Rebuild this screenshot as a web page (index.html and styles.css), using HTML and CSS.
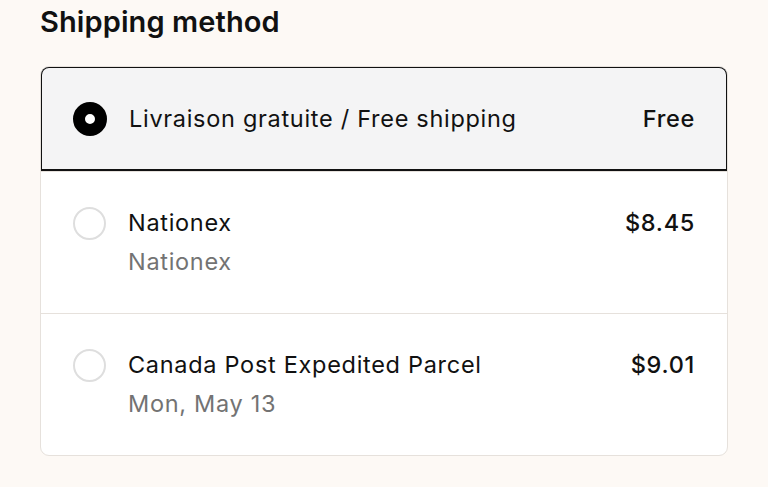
FILE: index.html
```html
<!DOCTYPE html>
<html>
<head>
<meta charset="utf-8">
<link rel="stylesheet" href="styles.css">
</head>
<body>
<div class="page">
  <h2 class="title">Shipping method</h2>
  <div class="options">
    <div class="option selected">
      <span class="radio on"></span>
      <div class="info"><div class="name">Livraison gratuite / Free shipping</div></div>
      <div class="price">Free</div>
    </div>
    <div class="option">
      <span class="radio"></span>
      <div class="info"><div class="name">Nationex</div><div class="sub">Nationex</div></div>
      <div class="price">$8.45</div>
    </div>
    <div class="option last">
      <span class="radio"></span>
      <div class="info"><div class="name">Canada Post Expedited Parcel</div><div class="sub">Mon, May 13</div></div>
      <div class="price">$9.01</div>
    </div>
  </div>
</div>
</body>
</html>
```
FILE: styles.css
```css
html, body { margin: 0; padding: 0; }
body {
  background: #fdf9f5;
  font-family: Inter, "Noto Sans", sans-serif;
  color: #111;
  width: 768px;
  height: 487px;
  overflow: hidden;
}
.page { padding: 5px 40px 0 40px; }
.title {
  margin: 0 0 27px 0;
  font-size: 29px;
  font-weight: 600;
  line-height: 34px;
  letter-spacing: 0.1px;
}
.options {
  background: #fff;
  border: 1px solid #e6e1dc;
  border-radius: 9px;
  overflow: hidden;
}
.option {
  display: flex;
  align-items: flex-start;
  padding: 35px 32px 35px 32px;
  border-top: 1px solid #e6e1dc;
  font-size: 23.5px;
  letter-spacing: 0.7px;
}
.option.selected {
  background: #f4f4f5;
  border: 2px solid #111;
  border-radius: 9px 9px 0 0;
  margin: -1px -1px 0 -1px;
  align-items: center;
  box-sizing: border-box;
  height: 105px;
  padding: 0 31px;
}
.radio {
  width: 33px;
  height: 33px;
  box-sizing: border-box;
  border: 2px solid #dedede;
  border-radius: 50%;
  flex: none;
  margin-right: 22px;
  margin-top: 0;
  background: #fff;
}
.radio.on {
  width: 34px;
  height: 34px;
  border: 12px solid #000;
  margin-right: 22px;
}
.info { flex: 1; }
.name { line-height: 32px; }
.sub { color: #737373; line-height: 32px; margin-top: 7px; }
.price { line-height: 32px; font-weight: 500; }
```
